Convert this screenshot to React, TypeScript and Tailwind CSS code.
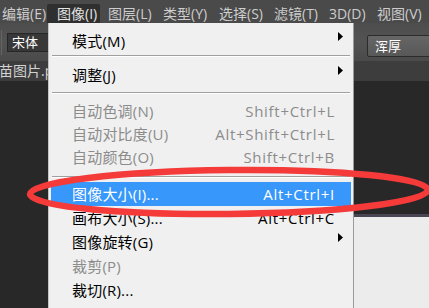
import React from "react";

const menubar = [
  { label: "编辑(E)", w: "w-[47px]", pl: "pl-[2px]" },
  { label: "图像(I)", w: "w-[53px]", pl: "pl-[10px]", active: true },
  { label: "图层(L)", w: "w-[55px]", pl: "pl-[8px]" },
  { label: "类型(Y)", w: "w-[56px]", pl: "pl-[8px]" },
  { label: "选择(S)", w: "w-[55px]", pl: "pl-[8px]" },
  { label: "滤镜(T)", w: "w-[55px]", pl: "pl-[8px]" },
  { label: "3D(D)", w: "w-[48px]", pl: "pl-[8px]" },
  { label: "视图(V)", w: "w-[55px]", pl: "pl-[8px]" },
];

type Item =
  | { sep: true; cls: string }
  | {
      sep?: false;
      label: string;
      shortcut?: string;
      sub?: boolean;
      disabled?: boolean;
      active?: boolean;
      h: string;
    };

const items: Item[] = [
  { label: "模式(M)", sub: true, h: "h-[23px]" },
  { sep: true, cls: "h-[11px] pt-[2px]" },
  { label: "调整(J)", sub: true, h: "h-[23px]" },
  { sep: true, cls: "h-[13px] pt-[5px]" },
  { label: "自动色调(N)", shortcut: "Shift+Ctrl+L", disabled: true, h: "h-[23px]" },
  { label: "自动对比度(U)", shortcut: "Alt+Shift+Ctrl+L", disabled: true, h: "h-[23px]" },
  { label: "自动颜色(O)", shortcut: "Shift+Ctrl+B", disabled: true, h: "h-[23px]" },
  { sep: true, cls: "h-[13px] pt-[7px]" },
  { label: "图像大小(I)...", shortcut: "Alt+Ctrl+I", active: true, h: "h-[24px]" },
  { label: "画布大小(S)...", shortcut: "Alt+Ctrl+C", h: "h-[24px]" },
  { label: "图像旋转(G)", sub: true, h: "h-[24px]" },
  { label: "裁剪(P)", disabled: true, h: "h-[24px]" },
  { label: "裁切(R)...", h: "h-[24px]" },
];

const Arrow = () => (
  <svg width="5" height="9" viewBox="0 0 5 9" className="-translate-y-[5px]">
    <polygon points="0,0 5,4.5 0,9" fill="#000" />
  </svg>
);

export default function App() {
  return (
    <div className="relative w-[429px] h-[308px] overflow-hidden bg-[#282828] font-['Open_Sans','Noto_Sans_CJK_SC',sans-serif]">
      {/* menu bar */}
      <div className="flex h-[23px] bg-[#4a4a4a] text-[14px] text-[#cdcdcd]">
        {menubar.map((m) => (
          <div
            key={m.label}
            className={`${m.w} ${m.pl} shrink-0 mt-[4px] h-[19px] leading-[19px] whitespace-nowrap ${
              m.active ? "bg-[#2f2f2f] rounded-t-[2px] text-[#e4e4e4]" : ""
            }`}
          >
            {m.label}
          </div>
        ))}
      </div>

      {/* options bar */}
      <div className="flex justify-between h-[38px] bg-gradient-to-b from-[#4d4d4d] via-[#535353] to-[#4a4a4a]">
        <div className="flex items-start">
          <div className="mt-[7px] ml-[1px] h-[25px] w-[1px] bg-[#3a3a3a] border-r border-[#656565]" />
          <div className="ml-[5px] mt-[10px] h-[19px] w-[80px] bg-[#383838] border border-[#262626] text-[13px] leading-[17px] text-white pl-[4px]">
            宋体
          </div>
        </div>
        <div className="mt-[12px] -mr-[10px] h-[22px] w-[72px] rounded-[2px] border border-[#2c2c2c] bg-gradient-to-b from-[#666666] to-[#585858] text-[13px] leading-[20px] text-white pl-[7px]">
          浑厚
        </div>
      </div>

      {/* document tabs */}
      <div className="h-[20px] bg-[#3d3d3d] text-[14px] leading-[20px] text-[#d2d2d2] -ml-[1px] whitespace-nowrap">
        苗图片.psd
      </div>

      {/* workspace */}
      <div className="h-[133px]" />
      <div className="ml-[200px] h-[3px] bg-[#4a4553]" />
      <div className="ml-[200px] h-[100px] bg-[#ececec]" />

      {/* dropdown menu */}
      <div className="absolute left-[48px] top-[23px] w-[306px] h-[300px] bg-[#f0f0f0] border-l border-l-[#c4c4c4] border-r border-r-[#9a9a9a] px-[2px] pt-[7px] text-[15px]">
        {items.map((it, i) =>
          it.sep ? (
            <div key={i} className={it.cls}>
              <div className="mx-[1px] border-t border-t-[#a0a0a0] border-b border-b-white" />
            </div>
          ) : (
            <div
              key={i}
              className={`flex items-center ${it.h} pl-[21px] whitespace-nowrap ${
                it.active ? "bg-[#3797fb] text-white" : it.disabled ? "text-[#8c8c8c]" : "text-black"
              }`}
            >
              <span className="flex-1 tracking-[0.2px]">{it.label}</span>
              {it.shortcut && <span className="tracking-[0.7px]">{it.shortcut}</span>}
              <span className="w-[16px] pl-[3px] flex items-center">{it.sub && <Arrow />}</span>
            </div>
          )
        )}
      </div>

      {/* red annotation */}
      <svg className="absolute inset-0 pointer-events-none" width="429" height="308" viewBox="0 0 429 308">
        <ellipse cx="229" cy="192" rx="199" ry="22" fill="none" stroke="#f53a3a" strokeWidth="6.5" transform="rotate(-0.6 229 192)" />
      </svg>
    </div>
  );
}
